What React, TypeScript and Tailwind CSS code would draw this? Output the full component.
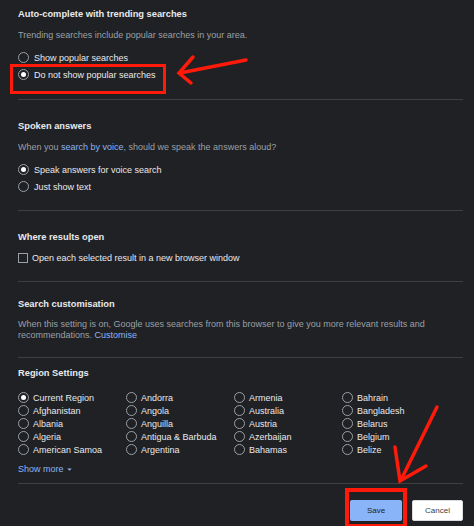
import React from "react";

const font = { fontFamily: '"Liberation Sans", Arial, sans-serif' };

function Radio({ label, checked = false }: { label: string; checked?: boolean }) {
  return (
    <label className="flex h-[17px] items-center gap-[5px] text-[9px] leading-[12px] text-[#e8eaed]">
      <span className="flex h-[11px] w-[11px] shrink-0 items-center justify-center rounded-full border border-[#9aa0a6]">
        {checked && <span className="h-[5px] w-[5px] rounded-full bg-white" />}
      </span>
      {label}
    </label>
  );
}

function RegionRadio({ label, checked = false }: { label: string; checked?: boolean }) {
  return (
    <div className="flex h-[13px] items-center gap-[4px] text-[9px] leading-[12px] text-[#e8eaed]">
      <span className="flex h-[11px] w-[11px] shrink-0 items-center justify-center rounded-full border border-[#9aa0a6]">
        {checked && <span className="h-[5px] w-[5px] rounded-full bg-white" />}
      </span>
      {label}
    </div>
  );
}

function Titulo({ children }: { children: React.ReactNode }) {
  return <h2 className="text-[9.3px] font-bold leading-[12px] text-[#e8eaed]">{children}</h2>;
}

function Divisor() {
  return <div className="h-px bg-[#3c4043]" />;
}

const regioes = [
  ["Current Region", "Andorra", "Armenia", "Bahrain"],
  ["Afghanistan", "Angola", "Australia", "Bangladesh"],
  ["Albania", "Anguilla", "Austria", "Belarus"],
  ["Algeria", "Antigua & Barbuda", "Azerbaijan", "Belgium"],
  ["American Samoa", "Argentina", "Bahamas", "Belize"],
];

export default function App() {
  return (
    <div className="relative h-[526px] w-[474px] overflow-hidden bg-[#202124] pl-[18px] pr-[11px]" style={font}>
      {/* Auto-complete */}
      <div className="pt-[8px]">
        <Titulo>Auto-complete with trending searches</Titulo>
        <p className="mt-[9px] text-[9px] leading-[12px] text-[#9aa0a6]">
          Trending searches include popular searches in your area.
        </p>
        <div className="mt-[8px] flex flex-col">
          <Radio label="Show popular searches" />
          <Radio label="Do not show popular searches" checked />
        </div>
      </div>
      <div className="mt-[16px]">
        <Divisor />
      </div>

      {/* Spoken answers */}
      <div className="pt-[20px]">
        <Titulo>Spoken answers</Titulo>
        <p className="mt-[9px] text-[9px] leading-[12px] text-[#9aa0a6]">
          When you <span className="text-[#8ab4f8]">search by voice</span>, should we speak the answers aloud?
        </p>
        <div className="mt-[8px] flex flex-col">
          <Radio label="Speak answers for voice search" checked />
          <Radio label="Just show text" />
        </div>
      </div>
      <div className="mt-[15px]">
        <Divisor />
      </div>

      {/* Where results open */}
      <div className="pt-[20px]">
        <Titulo>Where results open</Titulo>
        <label className="mt-[6px] flex h-[17px] items-center gap-[4px] text-[9px] leading-[12px] text-[#e8eaed]">
          <span className="h-[10px] w-[10px] border border-[#9aa0a6]" />
          Open each selected result in a new browser window
        </label>
      </div>
      <div className="mt-[15px]">
        <Divisor />
      </div>

      {/* Search customisation */}
      <div className="pt-[16px]">
        <Titulo>Search customisation</Titulo>
        <p className="mt-[9px] pr-[20px] text-[9px] leading-[11px] text-[#9aa0a6]">
          When this setting is on, Google uses searches from this browser to give you more relevant results and
          recommendations. <span className="text-[#8ab4f8]">Customise</span>
        </p>
      </div>
      <div className="mt-[16px]">
        <Divisor />
      </div>

      {/* Region settings */}
      <div className="pt-[9px]">
        <Titulo>Region Settings</Titulo>
        <div className="mt-[12px] grid grid-cols-[108px_108px_108px_108px]">
          {regioes.flat().map((r) => (
            <RegionRadio key={r} label={r} checked={r === "Current Region"} />
          ))}
        </div>
        <div className="mt-[7px] flex h-[12px] items-center gap-[3px] text-[9px] leading-[12px] text-[#8ab4f8]">
          Show more
          <svg width="5" height="3" viewBox="0 0 6 4">
            <path d="M0 0.5 L3 3.5 L6 0.5" fill="#8ab4f8" />
          </svg>
        </div>
      </div>
      <div className="mt-[8px]">
        <Divisor />
      </div>

      <div className="mt-[16px] flex justify-end gap-[10px]">
        <button className="h-[21px] w-[52px] rounded-[2px] bg-[#8ab4f8] text-[8px] text-[#202124]">Save</button>
        <button className="h-[21px] w-[51px] rounded-[2px] border border-[#dadce0] bg-white text-[8px] text-[#3c4043]">
          Cancel
        </button>
      </div>

      {/* anotações */}
      <div className="absolute left-[10px] top-[64px] h-[30px] w-[156px] border-[3px] border-[#ff1a0a]" />
      <div className="absolute left-[345px] top-[488px] h-[40px] w-[62px] border-[4px] border-[#ff1a0a]" />
      <svg className="absolute left-0 top-0" width="474" height="526" viewBox="0 0 474 526">
        <g stroke="#ff1a0a" strokeWidth="3.5" strokeLinecap="round" fill="none">
          <path d="M246 60 L180 73" />
          <path d="M193 57 L179 73 L191 83" />
          <path d="M437 407 L401 480" />
          <path d="M395 447 L400 481 L426 466" />
        </g>
      </svg>
    </div>
  );
}
